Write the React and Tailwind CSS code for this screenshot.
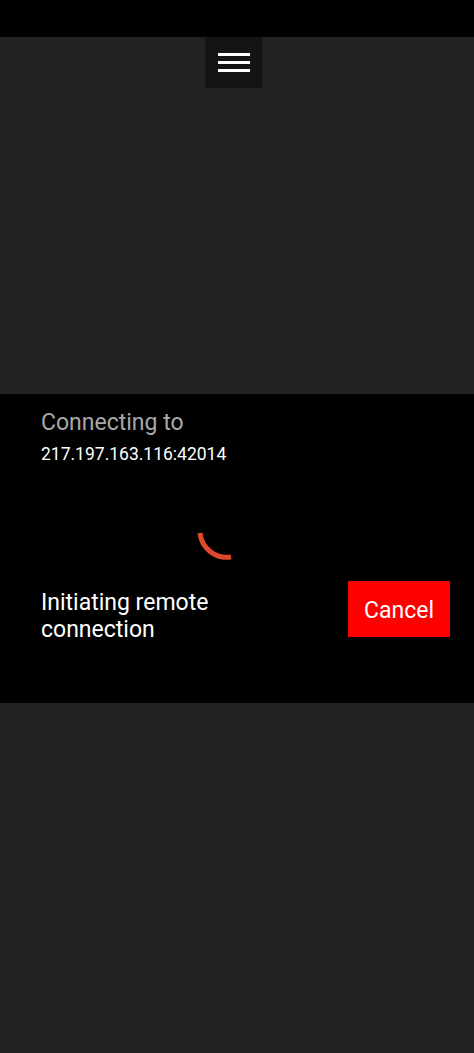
export default function App() {
  return (
    <div className="w-[474px] h-[1053px] flex flex-col bg-[#212121]" style={{ fontFamily: 'Roboto, "Liberation Sans", sans-serif' }}>
      <div className="h-[37px] bg-black shrink-0" />
      <div className="h-[357px] shrink-0 flex pl-[205px]">
        <button className="w-[57px] h-[51px] bg-[#141414] flex flex-col items-center justify-center gap-[5px]">
          <span className="block w-[32px] h-[3px] bg-white" />
          <span className="block w-[32px] h-[3px] bg-white" />
          <span className="block w-[32px] h-[3px] bg-white" />
        </button>
      </div>
      <div className="h-[309px] shrink-0 bg-black flex flex-col px-[41px]">
        <div className="pt-[15px] text-[23px] leading-[28px] text-[#a8a8a8]">Connecting to</div>
        <div className="pt-[5px] text-[17.5px] leading-[24px] text-white">217.197.163.116:42014</div>
        <div className="h-[116px] relative">
          <svg className="absolute left-[155px] top-[59px]" width="60" height="60" viewBox="0 0 60 60">
            <path d="M 4 8 A 27 27 0 0 0 35 32" fill="none" stroke="#e0482a" strokeWidth="5" />
          </svg>
        </div>
        <div className="flex items-start justify-between mr-[-17px]">
          <div className="mt-[7px] text-[23px] leading-[27px] text-white">Initiating remote<br />connection</div>
          <button className="w-[102px] h-[56px] mt-[-1px] pt-[4px] bg-[#ff0000] text-white text-[23px]">Cancel</button>
        </div>
      </div>
      <div className="flex-1" />
    </div>
  );
}
